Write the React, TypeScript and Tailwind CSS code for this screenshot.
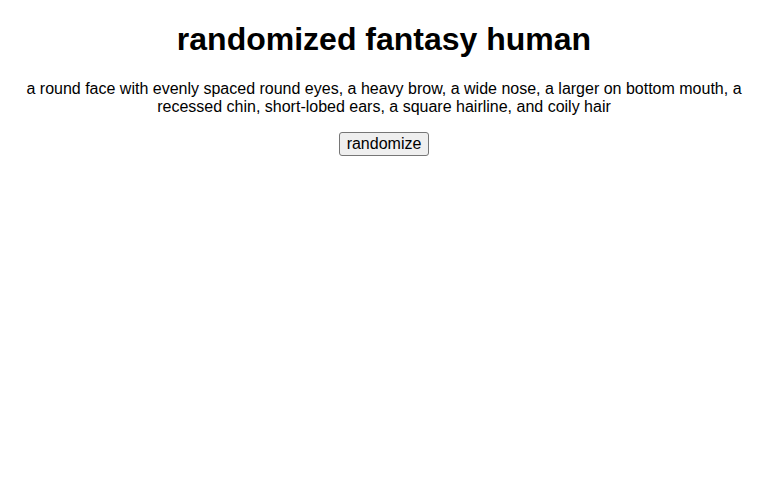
import { useState } from "react";

const faces = ["round", "oval", "square", "heart-shaped", "long"];
const eyes = ["evenly spaced round eyes", "close-set narrow eyes", "wide-set almond eyes", "deep-set hooded eyes"];
const brows = ["a heavy brow", "a thin brow", "an arched brow", "a flat brow"];
const noses = ["a wide nose", "a hooked nose", "a button nose", "a long nose"];
const mouths = ["a larger on bottom mouth", "a thin-lipped mouth", "a wide mouth", "a small mouth"];
const chins = ["a recessed chin", "a pointed chin", "a cleft chin", "a square chin"];
const ears = ["short-lobed ears", "pointed ears", "large ears", "attached-lobe ears"];
const hairlines = ["a square hairline", "a widow's peak", "a receding hairline", "a rounded hairline"];
const hairs = ["coily hair", "straight hair", "wavy hair", "curly hair"];

const pick = (list: string[]) => list[Math.floor(Math.random() * list.length)];

function describe() {
    return `a ${pick(faces)} face with ${pick(eyes)}, ${pick(brows)}, ${pick(noses)}, ${pick(mouths)}, ${pick(chins)}, ${pick(ears)}, ${pick(hairlines)}, and ${pick(hairs)}`;
}

export default function App() {
    const [description, setDescription] = useState(
        "a round face with evenly spaced round eyes, a heavy brow, a wide nose, a larger on bottom mouth, a recessed chin, short-lobed ears, a square hairline, and coily hair"
    );

    return (
        <div className="min-h-screen bg-white px-2 text-center font-['Liberation_Sans',Arial,sans-serif] text-black">
            <h1 className="pt-[21px] text-[32px] font-bold leading-[1.15]">
                randomized fantasy human
            </h1>
            <p className="mt-[22px] text-base leading-[1.15]">{description}</p>
            <button
                className="mt-[15px] rounded-[3px] border border-[#767676] bg-[#efefef] px-[7px] py-[2px] text-base leading-[1.15] hover:bg-[#e5e5e5]"
                onClick={() => setDescription(describe())}
            >
                randomize
            </button>
        </div>
    );
}
